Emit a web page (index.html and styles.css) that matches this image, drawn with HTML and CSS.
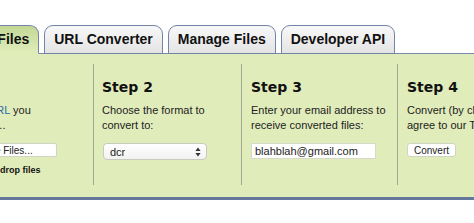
FILE: index.html
```html
<!DOCTYPE html>
<html lang="en">
<head>
  <meta charset="UTF-8">
  <meta name="viewport" content="width=device-width, initial-scale=1.0">
  <title>File Converter</title>
  <link rel="stylesheet" href="styles.css">
</head>
<body>
  <div class="page">
    <div class="tabs">
      <a class="tab active" href="#">Upload Files</a>
      <a class="tab" href="#">URL Converter</a>
      <a class="tab" href="#">Manage Files</a>
      <a class="tab" href="#">Developer API</a>
    </div>
    <div class="panel">
      <div class="step step-1">
        <h3>Step 1</h3>
        <p>Paste a <a href="#">URL</a> you<br>to convert...</p>
        <button class="browse">Choose Files...</button>
        <div class="drop">or drag and drop files</div>
      </div>
      <div class="step step-2">
        <h3>Step 2</h3>
        <p>Choose the format to convert to:</p>
        <div class="select">
          <span>dcr</span>
          <svg width="6" height="10" viewBox="0 0 6 10"><path d="M3 0.5L5.6 4H0.4Z M3 9.5L5.6 6H0.4Z" fill="#333"/></svg>
        </div>
      </div>
      <div class="step step-3">
        <h3>Step 3</h3>
        <p>Enter your email address to receive converted files:</p>
        <input class="email" type="text" value="blahblah@gmail.com">
      </div>
      <div class="step step-4">
        <h3>Step 4</h3>
        <p>Convert (by clicking you<br>agree to our Terms)</p>
        <button class="convert">Convert</button>
      </div>
    </div>
  </div>
</body>
</html>
```

FILE: styles.css
```css
body {
  margin: 0;
  background: #fff;
  overflow: hidden;
  font-family: 'Liberation Sans', Arial, sans-serif;
  color: #222;
}
.page {
  margin-left: -120px;
  width: 720px;
  padding-top: 25px;
}
.tabs {
  display: flex;
  align-items: flex-end;
  gap: 5px;
  padding-left: 56px;
  border-bottom: 1px solid #7d8cb0;
}
.tab {
  height: 27px;
  line-height: 27px;
  padding: 0 9px;
  margin-bottom: -1px;
  border: 1px solid #7384a8;
  border-radius: 9px 9px 0 0;
  background: linear-gradient(#f8f8f8, #e4e4e4);
  color: #111;
  font-size: 14px;
  font-weight: bold;
  text-decoration: none;
}
.tab.active {
  background: linear-gradient(#c3d894, #e1ecbb);
  border-bottom-color: #e1ecbb;
}
.panel {
  display: flex;
  background: #e1ecbb;
  padding: 10px 0 12px;
  border-bottom: 3px solid #66779c;
  box-shadow: 0 4px 5px rgba(0, 0, 0, 0.3);
}
.step {
  height: 121px;
  padding: 0 6px 0 9px;
  border-left: 1px solid #a3a896;
}
.step-1 {
  flex: 0 0 145px;
  padding: 0 0 0 68px;
  border-left: none;
}
.step-2 {
  flex: 0 0 132px;
  padding-left: 8px;
  padding-right: 7px;
}
.step-3 {
  flex: 0 0 140px;
}
.step-4 {
  flex: 1;
}
h3 {
  margin: 15px 0 7px;
  font-family: 'DejaVu Sans', Verdana, sans-serif;
  font-size: 14px;
  line-height: 17px;
  color: #111;
}
p {
  margin: 0 0 10px;
  font-size: 11px;
  line-height: 15px;
}
p a {
  color: #2b69a8;
  text-decoration: none;
}
.browse {
  display: block;
  width: 109px;
  height: 14px;
  padding: 0 0 0 17px;
  text-align: left;
  background: #fff;
  border: 1px solid #d0d4c4;
  border-radius: 2px;
  font-family: 'Liberation Sans', Arial, sans-serif;
  font-size: 10px;
  color: #222;
}
.drop {
  margin-top: 8px;
  font-size: 9px;
  font-weight: bold;
  color: #111;
}
.select {
  display: flex;
  align-items: center;
  justify-content: space-between;
  width: 91px;
  height: 15px;
  padding: 0 5px 0 6px;
  margin-left: 1px;
  background: linear-gradient(#fff, #f2f2f2);
  border: 1px solid #c8cbc0;
  border-radius: 4px;
  font-size: 11px;
}
.email {
  display: block;
  box-sizing: border-box;
  width: 125px;
  height: 16px;
  padding: 0 3px;
  border: 1px solid #d6d9cc;
  background: #fff;
  font-family: 'Liberation Sans', Arial, sans-serif;
  font-size: 11px;
  color: #222;
}
.convert {
  display: block;
  box-sizing: border-box;
  width: 49px;
  height: 14px;
  padding: 0;
  background: #fff;
  border: 1px solid #d0d4c4;
  border-radius: 3px;
  font-family: 'Liberation Sans', Arial, sans-serif;
  font-size: 10px;
  color: #222;
}
```
